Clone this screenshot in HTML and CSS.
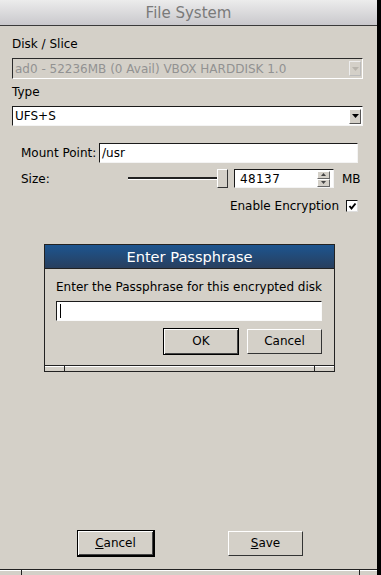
FILE: index.html
```html
<!DOCTYPE html>
<html>
<head>
  <title>File System</title>
  <link rel="stylesheet" href="styles.css">
</head>
<body>
  <div class="window">
    <div class="titlebar">File System</div>

    <div class="content">
      <div class="label">Disk / Slice</div>
      <div class="combo disabled">
        <span class="combo-text">ad0 - 52236MB (0 Avail) VBOX HARDDISK 1.0</span>
        <span class="arrow"><svg width="7" height="4" viewBox="0 0 7 4"><path d="M0 0h7L3.5 4z" fill="#b8b4ac"/></svg></span>
      </div>

      <div class="label">Type</div>
      <div class="combo">
        <span class="combo-text">UFS+S</span>
        <span class="arrow"><svg width="7" height="4" viewBox="0 0 7 4"><path d="M0 0h7L3.5 4z" fill="#000"/></svg></span>
      </div>

      <div class="row mount">
        <span class="row-label">Mount Point:</span>
        <div class="field">/usr</div>
      </div>

      <div class="row size">
        <span class="row-label">Size:</span>
        <div class="slider">
          <div class="track"></div>
          <div class="handle"></div>
        </div>
        <div class="spin">
          <span class="spin-text">48137</span>
          <span class="spin-btns">
            <span class="spin-btn"><svg width="5" height="3" viewBox="0 0 5 3"><path d="M2.5 0L5 3H0z" fill="#444"/></svg></span>
            <span class="spin-btn"><svg width="5" height="3" viewBox="0 0 5 3"><path d="M0 0h5L2.5 3z" fill="#444"/></svg></span>
          </span>
        </div>
        <span class="unit">MB</span>
      </div>

      <div class="row encrypt">
        <span>Enable Encryption</span>
        <span class="check"><svg width="9" height="9" viewBox="0 0 9 9"><path d="M1.5 4l2 2.5L7.5 1.5" stroke="#000" stroke-width="2" fill="none"/></svg></span>
      </div>

      <div class="dialog">
        <div class="dialog-title">Enter Passphrase</div>
        <div class="dialog-body">
          <div class="dialog-text">Enter the Passphrase for this encrypted disk</div>
          <div class="pass-field"><span class="caret"></span></div>
          <div class="dialog-buttons">
            <div class="btn default ok">OK</div>
            <div class="btn">Cancel</div>
          </div>
        </div>
        <div class="statusbar small">
          <span class="seg first"></span>
          <span class="seg mid"></span>
          <span class="seg last"></span>
        </div>
      </div>
    </div>

    <div class="bottom-buttons">
      <div class="btn big default"><u>C</u>ancel</div>
      <div class="btn big"><u>S</u>ave</div>
    </div>

    <div class="statusbar">
      <span class="seg first"></span>
      <span class="seg mid"></span>
      <span class="seg last"></span>
    </div>
  </div>
</body>
</html>
```

FILE: styles.css
```css
body {
  margin: 0;
  font-family: "DejaVu Sans", sans-serif;
  font-size: 12px;
  color: #000;
  background: #000;
  white-space: nowrap;
}

.window {
  width: 377px;
  height: 575px;
  background: #d4d0c8;
  display: flex;
  flex-direction: column;
}

.titlebar {
  height: 25px;
  line-height: 27px;
  text-align: center;
  font-size: 15px;
  color: #7a7a7a;
  background: linear-gradient(#ececec, #c9c8cc);
  border-bottom: 1px solid #3a3a3a;
}

.content {
  flex: 1;
  padding: 10px 0 0 12px;
}

.label {
  height: 22px;
  line-height: 16px;
}

.combo {
  width: 349px;
  height: 18px;
  background: #fff;
  border: 1px solid;
  border-color: #1a1a1a #f4f4f4 #f4f4f4 #1a1a1a;
  display: flex;
  align-items: center;
}

.combo.disabled {
  height: 19px;
  background: #d4d0c8;
  color: #929292;
  border-color: #2a2a2a #fff #fff #2a2a2a;
  margin-bottom: 5px;
}

.combo-text {
  flex: 1;
  padding-left: 2px;
}

.arrow {
  width: 10px;
  height: 13px;
  margin-right: 1px;
  background: #d4d0c8;
  border: 1px solid;
  border-color: #fff #555 #555 #fff;
  display: flex;
  align-items: center;
  justify-content: center;
}

.disabled .arrow {
  border-color: #eee #bbb #bbb #eee;
}

.row {
  display: flex;
  align-items: center;
}

.row-label {
  width: 78px;
  padding-left: 9px;
}

.mount {
  margin-top: 17px;
}

.field {
  width: 255px;
  height: 18px;
  line-height: 18px;
  padding-left: 2px;
  background: #fff;
  border: 1px solid;
  border-color: #1a1a1a #f4f4f4 #f4f4f4 #1a1a1a;
}

.size {
  margin-top: 6px;
}

.size .row-label {
  width: 107px;
}

.slider {
  width: 100px;
  height: 19px;
  position: relative;
  margin-right: 6px;
}

.track {
  position: absolute;
  left: 0;
  right: 6px;
  top: 8px;
  height: 2px;
  background: #222;
  border-bottom: 1px solid #fff;
}

.handle {
  position: absolute;
  right: 0;
  top: 0;
  width: 9px;
  height: 17px;
  background: #d4d0c8;
  border: 1px solid;
  border-color: #fff #333 #333 #fff;
}

.spin {
  width: 98px;
  height: 17px;
  background: #fff;
  border: 1px solid;
  border-color: #1a1a1a #f4f4f4 #f4f4f4 #1a1a1a;
  display: flex;
  align-items: center;
}

.spin-text {
  flex: 1;
  padding-left: 5px;
  letter-spacing: 0.4px;
}

.spin-btns {
  display: flex;
  flex-direction: column;
  margin-right: 3px;
}

.spin-btn {
  width: 11px;
  height: 6px;
  background: #d4d0c8;
  border: 1px solid;
  border-color: #fff #666 #666 #fff;
  display: flex;
  align-items: center;
  justify-content: center;
}

.unit {
  margin-left: 8px;
}

.encrypt {
  justify-content: flex-end;
  margin-top: 11px;
  padding-right: 19px;
}

.check {
  width: 10px;
  height: 10px;
  margin-left: 7px;
  background: #fff;
  border: 1px solid;
  border-color: #111 #ddd #ddd #111;
  display: flex;
  align-items: center;
  justify-content: center;
}

.dialog {
  width: 289px;
  margin: 31px 0 0 32px;
  background: #d4d0c8;
  border: 1px solid #222;
}

.dialog-title {
  height: 23px;
  line-height: 24px;
  text-align: center;
  font-size: 14.6px;
  color: #fff;
  background: linear-gradient(#1d5590, #283f5e);
  border-bottom: 1px solid #222;
}

.dialog-body {
  padding: 10px 12px 0 11px;
}

.dialog-text {
  height: 22px;
  line-height: 16px;
}

.pass-field {
  height: 18px;
  background: #fff;
  border: 1px solid;
  border-color: #1a1a1a #fafafa #fafafa #1a1a1a;
  display: flex;
  align-items: center;
}

.caret {
  width: 1px;
  height: 14px;
  margin-left: 3px;
  background: #000;
}

.dialog-buttons {
  display: flex;
  justify-content: flex-end;
  align-items: flex-start;
  gap: 8px;
  margin-top: 7px;
  height: 37px;
}

.btn {
  width: 73px;
  height: 23px;
  line-height: 23px;
  text-align: center;
  background: #d4d0c8;
  border: 1px solid;
  border-color: #fff #333 #333 #fff;
}

.btn.ok {
  width: 74px;
  height: 25px;
  line-height: 25px;
}

.btn.default {
  border: 1px solid #000;
  box-shadow: inset 1px 1px 0 #fff, inset -1px -1px 0 #444;
}

.dialog-buttons .btn:not(.ok) {
  margin-top: 1px;
}

.bottom-buttons {
  display: flex;
  align-items: center;
  gap: 73px;
  padding-left: 77px;
  margin-bottom: 12px;
}

.btn.big {
  height: 23px;
  line-height: 23px;
}

.bottom-buttons .default {
  height: 24px;
  line-height: 24px;
  width: 75px;
  border-width: 1px 2px 2px 1px;
}

.statusbar {
  height: 5px;
  display: flex;
  border-top: 1px solid #222;
}

.seg {
  background: #d4d0c8;
  border-right: 1px solid #222;
  box-shadow: inset 0 1px 0 #fff;
}

.seg.first {
  width: 21px;
}

.seg.mid {
  flex: 1;
}

.seg.last {
  width: 17px;
  border-right: none;
}

.statusbar.small .seg.first {
  width: 19px;
}

.statusbar.small .seg.last {
  width: 19px;
}
```
